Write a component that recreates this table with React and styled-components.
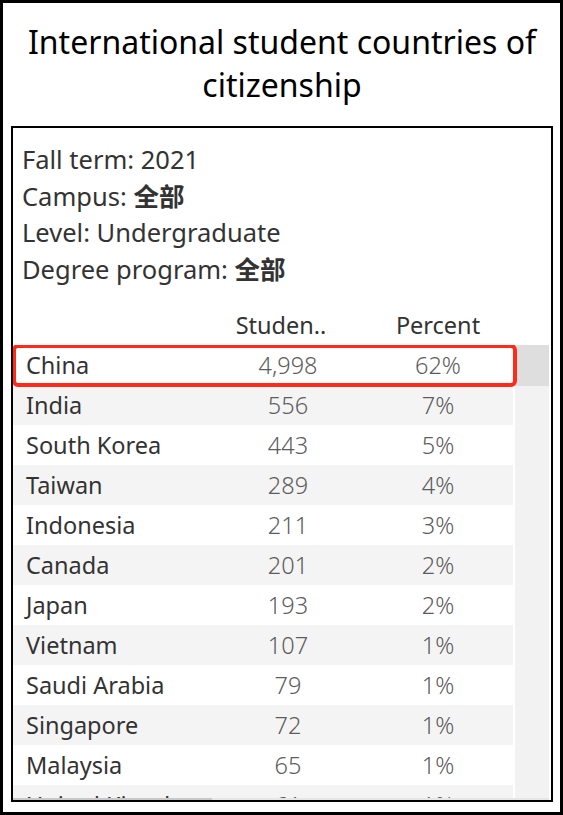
import React from "react";
import styled, { createGlobalStyle } from "styled-components";

const GlobalStyle = createGlobalStyle`
  html, body {
    margin: 0;
    padding: 0;
    background: #fff;
  }
  body {
    font-family: "Noto Sans", "Noto Sans CJK SC", sans-serif;
  }
`;

const Frame = styled.div`
  box-sizing: border-box;
  width: 563px;
  height: 815px;
  border: 3px solid #000;
  display: flex;
  flex-direction: column;
  padding: 0 7px 10px 8px;
  background: #fff;
`;

const Title = styled.h1`
  margin: 0;
  padding: 17px 0 0;
  height: 123px;
  flex: none;
  box-sizing: border-box;
  text-align: center;
  font-size: 32px;
  font-weight: 400;
  line-height: 43px;
  color: #000;
`;

const Panel = styled.div`
  flex: 1;
  border: 2px solid #000;
  display: flex;
  flex-direction: column;
  overflow: hidden;
  min-height: 0;
`;

const Filters = styled.div`
  flex: none;
  padding: 13px 9px 0;
  height: 176px;
  box-sizing: border-box;
`;

const FilterLine = styled.div`
  font-size: 25.5px;
  line-height: 36px;
  color: #333;
  white-space: nowrap;

  b {
    font-family: "Noto Sans CJK SC", sans-serif;
    font-weight: 700;
  }
`;

const Grid = styled.div`
  display: grid;
  grid-template-columns: 200px 150px 150px;
`;

const HeaderRow = styled(Grid)`
  flex: none;
  height: 41px;
  align-items: center;
  font-size: 23.5px;
  color: #333;
`;

const HeaderCell = styled.div`
  text-align: center;
  padding-right: ${({ $shift }) => $shift || 0}px;
`;

const Body = styled.div`
  flex: 1;
  position: relative;
  display: flex;
  gap: 2px;
  min-height: 0;
  overflow: hidden;
`;

const Rows = styled.div`
  width: 500px;
  display: flex;
  flex-direction: column;
`;

const Row = styled(Grid)`
  flex: none;
  height: 40px;
  align-items: center;
  font-size: 23.5px;
  background: ${({ $striped }) => ($striped ? "#f4f4f4" : "#fff")};
`;

const Country = styled.div`
  padding-left: 13px;
  color: #333;
  white-space: nowrap;
`;

const Num = styled.div`
  text-align: center;
  color: #5c5c5c;
  font-weight: 300;
`;

const ScrollTrack = styled.div`
  width: 34px;
  background: linear-gradient(#dedede 0 41px, #f2f2f2 41px);
`;

const HScroll = styled.div`
  position: absolute;
  left: 0;
  right: 2px;
  bottom: 0;
  height: 2px;
  background: linear-gradient(to right, #c8c8c8 0 199px, #e6e6e6 199px);
`;

const Highlight = styled.div`
  position: absolute;
  left: -1px;
  top: -1px;
  width: 505px;
  height: 43px;
  box-sizing: border-box;
  border: 4px solid #ff2a1a;
  border-radius: 6px;
  pointer-events: none;
`;

const data = [
  ["China", "4,998", "62%"],
  ["India", "556", "7%"],
  ["South Korea", "443", "5%"],
  ["Taiwan", "289", "4%"],
  ["Indonesia", "211", "3%"],
  ["Canada", "201", "2%"],
  ["Japan", "193", "2%"],
  ["Vietnam", "107", "1%"],
  ["Saudi Arabia", "79", "1%"],
  ["Singapore", "72", "1%"],
  ["Malaysia", "65", "1%"],
  ["United Kingdom", "61", "1%"],
];

export default function App() {
  return (
    <>
      <GlobalStyle />
      <Frame>
        <Title>
          International student countries of
          <br />
          citizenship
        </Title>
        <Panel>
          <Filters>
            <FilterLine>Fall term: 2021</FilterLine>
            <FilterLine>
              Campus: <b>全部</b>
            </FilterLine>
            <FilterLine>Level: Undergraduate</FilterLine>
            <FilterLine>
              Degree program: <b>全部</b>
            </FilterLine>
          </Filters>
          <HeaderRow>
            <div />
            <HeaderCell $shift={14}>Studen..</HeaderCell>
            <HeaderCell>Percent</HeaderCell>
          </HeaderRow>
          <Body>
            <Rows>
              {data.map(([name, count, pct], i) => (
                <Row key={name} $striped={i % 2 === 1}>
                  <Country>{name}</Country>
                  <Num>{count}</Num>
                  <Num>{pct}</Num>
                </Row>
              ))}
            </Rows>
            <ScrollTrack />
            <HScroll />
            <Highlight />
          </Body>
        </Panel>
      </Frame>
    </>
  );
}
